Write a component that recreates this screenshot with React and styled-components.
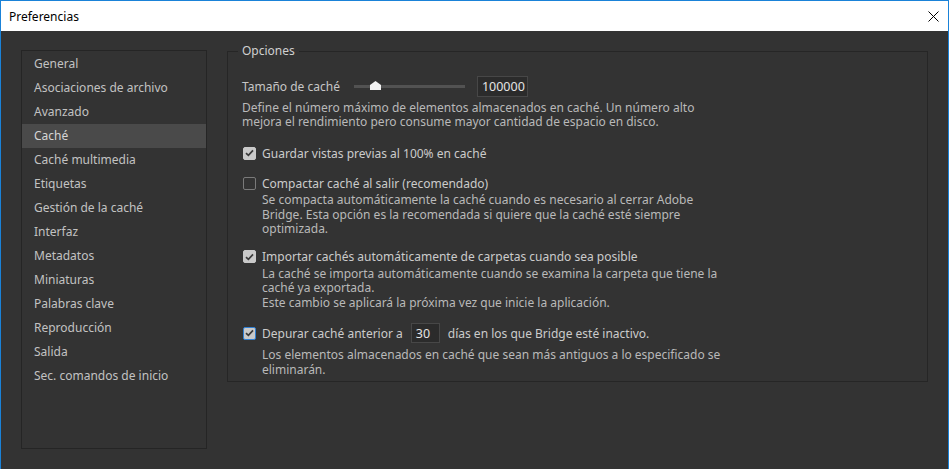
import React from "react";
import styled, { createGlobalStyle } from "styled-components";

const Global = createGlobalStyle`
  html, body { margin: 0; padding: 0; background: #333333; }
  body { font-family: "Noto Sans", "Open Sans", sans-serif; font-size: 12px; }
  * { box-sizing: border-box; }
`;

const Window = styled.div`
  width: 949px;
  height: 469px;
  border: 1px solid #1a82d8;
  border-bottom: none;
  background: #333333;
  display: flex;
  flex-direction: column;
  overflow: hidden;
`;

const TitleBar = styled.div`
  height: 30px;
  flex: none;
  background: #ffffff;
  display: flex;
  align-items: center;
  justify-content: space-between;
  padding: 0 0 0 8px;
  color: #000;
  font-size: 12px;
`;

const CloseButton = styled.div`
  width: 30px;
  height: 30px;
  display: flex;
  align-items: center;
  justify-content: center;
`;

const Body = styled.div`
  flex: 1;
  display: flex;
  align-items: flex-start;
  gap: 20px;
  padding: 19px 0 0 20px;
`;

const Sidebar = styled.div`
  width: 186px;
  height: 399px;
  border: 1px solid #252525;
  padding-top: 1px;
  display: flex;
  flex-direction: column;
`;

const NavItem = styled.div`
  height: 24px;
  line-height: 24px;
  padding-left: 12px;
  color: ${(p) => (p.$active ? "#d6d6d6" : "#c2c2c2")};
  background: ${(p) => (p.$active ? "#4a4a4a" : "transparent")};
  white-space: nowrap;
`;

const Group = styled.fieldset`
  width: 701px;
  height: 338px;
  margin: 0;
  margin-top: -6px;
  padding: 0 0 0 14px;
  border: 1px solid #262626;
  display: flex;
  flex-direction: column;
  min-width: 0;
`;

const Legend = styled.legend`
  padding: 0 4px;
  margin-left: -4px;
  color: #d0d0d0;
  line-height: 14px;
`;

const SizeRow = styled.div`
  display: flex;
  align-items: center;
  height: 22px;
  margin-top: 17px;
  color: #c6c6c6;
`;

const Slider = styled.div`
  position: relative;
  width: 111px;
  height: 3px;
  margin-left: 14px;
  background: #525252;
`;

const Thumb = styled.svg`
  position: absolute;
  left: 16px;
  top: -4px;
`;

const NumberBox = styled.div`
  height: ${(p) => p.$h || 21}px;
  width: ${(p) => p.$w}px;
  margin-left: ${(p) => p.$ml || 0}px;
  margin-right: ${(p) => p.$mr || 0}px;
  border: 1px solid #474747;
  background: #2b2b2b;
  color: #e4e4e4;
  display: flex;
  align-items: center;
  padding-left: 4px;
  font-size: 12.5px;
`;

const Description = styled.div`
  color: #b9b9b9;
  line-height: ${(p) => p.$lh || 14.5}px;
  padding-left: ${(p) => p.$indent || 0}px;
  margin-top: ${(p) => p.$mt || 0}px;
  width: ${(p) => p.$w || 490}px;
`;

const Options = styled.div`
  display: flex;
  flex-direction: column;
  gap: 10px;
  margin-top: ${(p) => p.$mt || 0}px;
`;

const OptionBlock = styled.div`
  display: flex;
  flex-direction: column;
`;

const OptionRow = styled.div`
  display: flex;
  align-items: center;
  height: ${(p) => (p.$tall ? 26 : 20)}px;
  color: #cbcbcb;
  white-space: nowrap;
`;

const Box = styled.div`
  width: 13px;
  height: 13px;
  margin: 0 6px 0 1px;
  border-radius: 2px;
  flex: none;
  display: flex;
  align-items: center;
  justify-content: center;
  background: ${(p) => (p.$checked ? "#c9c9c9" : "transparent")};
  border: 1px solid ${(p) => (p.$focus ? "#2f7fd3" : p.$checked ? "#c9c9c9" : "#7a7a7a")};
`;

const Check = () => (
  <svg width="9" height="8" viewBox="0 0 9 8">
    <path d="M1 4.2 L3.4 6.4 L8 1.4" fill="none" stroke="#3a3a3a" strokeWidth="1.7" />
  </svg>
);

function Checkbox({ checked, focus }) {
  return <Box $checked={checked} $focus={focus}>{checked && <Check />}</Box>;
}

const nav = [
  "General",
  "Asociaciones de archivo",
  "Avanzado",
  "Caché",
  "Caché multimedia",
  "Etiquetas",
  "Gestión de la caché",
  "Interfaz",
  "Metadatos",
  "Miniaturas",
  "Palabras clave",
  "Reproducción",
  "Salida",
  "Sec. comandos de inicio",
];

export default function App() {
  return (
    <>
      <Global />
      <Window>
        <TitleBar>
          <span>Preferencias</span>
          <CloseButton>
            <svg width="11" height="11" viewBox="0 0 11 11">
              <path d="M0.5 0.5 L10.5 10.5 M10.5 0.5 L0.5 10.5" stroke="#000" strokeWidth="1" />
            </svg>
          </CloseButton>
        </TitleBar>
        <Body>
          <Sidebar>
            {nav.map((n) => (
              <NavItem key={n} $active={n === "Caché"}>{n}</NavItem>
            ))}
          </Sidebar>
          <Group>
            <Legend>Opciones</Legend>
            <SizeRow>
              <span>Tamaño de caché</span>
              <Slider>
                <Thumb width="11" height="9" viewBox="0 0 11 9">
                  <path d="M0 4 L5.5 0 L11 4 L11 9 L0 9 Z" fill="#f2f2f2" />
                </Thumb>
              </Slider>
              <NumberBox $w={51} $ml={12}>100000</NumberBox>
            </SizeRow>
            <Description $lh={14} $mt={4}>
              Define el número máximo de elementos almacenados en caché. Un número alto mejora el rendimiento pero consume mayor cantidad de espacio en disco.
            </Description>
            <Options $mt={14}>
              <OptionBlock>
                <OptionRow>
                  <Checkbox checked />
                  Guardar vistas previas al 100% en caché
                </OptionRow>
              </OptionBlock>
              <OptionBlock>
                <OptionRow>
                  <Checkbox />
                  Compactar caché al salir (recomendado)
                </OptionRow>
                <Description $indent={20}>
                  Se compacta automáticamente la caché cuando es necesario al cerrar Adobe Bridge. Esta opción es la recomendada si quiere que la caché esté siempre optimizada.
                </Description>
              </OptionBlock>
              <OptionBlock>
                <OptionRow>
                  <Checkbox checked />
                  Importar cachés automáticamente de carpetas cuando sea posible
                </OptionRow>
                <Description $indent={20}>
                  La caché se importa automáticamente cuando se examina la carpeta que tiene la caché ya exportada.
                </Description>
                <Description $indent={20}>
                  Este cambio se aplicará la próxima vez que inicie la aplicación.
                </Description>
              </OptionBlock>
              <OptionBlock>
                <OptionRow $tall>
                  <Checkbox checked focus />
                  Depurar caché anterior a
                  <NumberBox $w={29} $h={20} $ml={8} $mr={8}>30</NumberBox>
                  días en los que Bridge esté inactivo.
                </OptionRow>
                <Description $indent={20} $mt={2}>
                  Los elementos almacenados en caché que sean más antiguos a lo especificado se eliminarán.
                </Description>
              </OptionBlock>
            </Options>
          </Group>
        </Body>
      </Window>
    </>
  );
}
